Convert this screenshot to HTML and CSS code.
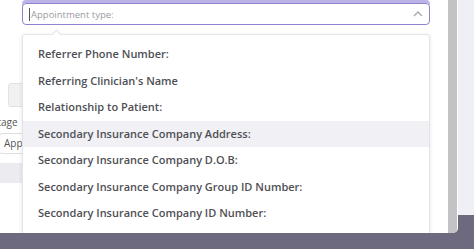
FILE: index.html
```html
<!DOCTYPE html>
<html>
<head>
    <title>Appointment type</title>
    <link rel="stylesheet" href="styles.css">
</head>
<body>
    <div class="screen">
        <div class="modal">
            <div class="modal-body">
                <div class="select">
                    <div class="select-input">
                        <span class="caret"></span>
                        <span class="placeholder">Appointment type:</span>
                        <svg class="chevron" width="10" height="6" viewBox="0 0 10 6">
                            <path d="M1 5 L5 1 L9 5" fill="none" stroke="#a9a9b0" stroke-width="1.3"/>
                        </svg>
                    </div>
                    <div class="dropdown">
                        <span class="notch"></span>
                        <ul class="options">
                            <li>Referrer Phone Number:</li>
                            <li>Referring Clinician's Name</li>
                            <li>Relationship to Patient:</li>
                            <li class="active">Secondary Insurance Company Address:</li>
                            <li>Secondary Insurance Company D.O.B:</li>
                            <li>Secondary Insurance Company Group ID Number:</li>
                            <li>Secondary Insurance Company ID Number:</li>
                        </ul>
                    </div>
                </div>

                <div class="bg-form">
                    <div class="bg-button"></div>
                    <div class="bg-label">Stage</div>
                    <div class="bg-field">App</div>
                    <div class="bg-band"></div>
                </div>
            </div>
            <div class="scrollbar"></div>
        </div>
        <div class="side"></div>
    </div>
</body>
</html>
```

FILE: styles.css
```css
body {
    margin: 0;
    background-color: #6d6a7f;
    font-family: "Open Sans", "Liberation Sans", sans-serif;
    overflow: hidden;
}
.screen {
    display: flex;
    align-items: flex-start;
    width: 474px;
    height: 249px;
}
.modal {
    display: flex;
    width: 458px;
    height: 233px;
    background-color: #fff;
    border-bottom-right-radius: 5px;
    overflow: hidden;
}
.modal-body {
    width: 448px;
    padding-top: 3px;
}
.scrollbar {
    width: 9px;
    background-color: #c3c3c5;
    border-bottom-right-radius: 4px;
}
.side {
    flex: 1;
    height: 215px;
    background-color: #eef0f5;
}
.select {
    position: relative;
    margin-left: 22px;
    width: 408px;
    z-index: 2;
}
.select-input {
    display: flex;
    align-items: center;
    height: 20px;
    padding: 0 6px 0 6px;
    border: 1px solid #8f83cf;
    border-radius: 4px;
    box-shadow: 0 -3px 0 0 #bdb3e6;
}
.caret {
    width: 1px;
    height: 13px;
    background-color: #555;
}
.placeholder {
    flex: 1;
    margin-left: 1px;
    font-size: 9.5px;
    color: #9b9ba2;
}
.chevron {
    margin-top: -1px;
}
.dropdown {
    position: absolute;
    top: 31px;
    left: 0;
    right: 0;
    background-color: #fff;
    border: 1px solid #e4e4e8;
    border-radius: 3px;
    box-shadow: 0 1px 4px rgba(40, 40, 60, 0.12);
}
.notch {
    position: absolute;
    top: -4px;
    left: 30px;
    width: 6px;
    height: 6px;
    background-color: #fff;
    border-top: 1px solid #e4e4e8;
    border-left: 1px solid #e4e4e8;
    transform: rotate(45deg);
}
.options {
    list-style: none;
    margin: 0;
    padding: 6px 0 7px;
}
.options li {
    height: 26.5px;
    line-height: 26.5px;
    padding-left: 15px;
    font-size: 11px;
    font-weight: 600;
    color: #4f4f55;
    white-space: nowrap;
}
.options li.active {
    background-color: #f1f1f5;
}
.bg-form {
    margin-top: 58px;
    font-size: 10px;
    color: #555;
}
.bg-button {
    margin-left: 8px;
    width: 420px;
    height: 22px;
    background-color: #f1f1f4;
    border: 1px solid #e2e2e6;
    border-radius: 3px;
}
.bg-label {
    margin-top: 9px;
    margin-left: -8px;
    height: 13px;
    line-height: 13px;
}
.bg-field {
    margin-top: 4px;
    margin-left: -1px;
    width: 420px;
    height: 19px;
    line-height: 19px;
    padding-left: 4px;
    border: 1px solid #e0e0e4;
    border-radius: 3px;
    font-size: 10px;
}
.bg-band {
    margin-top: 9px;
    width: 428px;
    height: 20px;
    background-color: #ececf0;
}
```
